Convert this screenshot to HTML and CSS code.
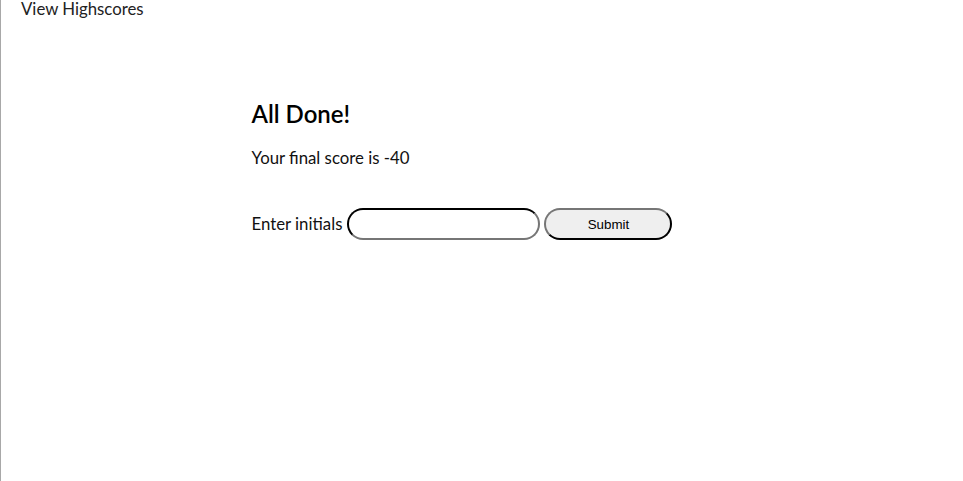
FILE: index.html
```html
<!DOCTYPE html>
<html>
<head>
<meta charset="utf-8">
<link rel="stylesheet" href="styles.css">
</head>
<body>
<div class="page">
  <header class="topbar">
    <a class="highscores">View Highscores</a>
  </header>
  <main class="quiz">
    <h1 class="title">All Done!</h1>
    <p class="score">Your final score is -40</p>
    <form class="entry">
      <label class="label">Enter initials</label>
      <input class="initials" type="text">
      <button class="submit" type="button">Submit</button>
    </form>
  </main>
</div>
</body>
</html>
```
FILE: styles.css
```css
html, body {
  margin: 0;
  padding: 0;
  background: #fff;
}
body {
  font-family: "Lato", "Noto Sans", sans-serif;
  color: #111;
}
.page {
  min-height: 481px;
  box-sizing: border-box;
  border-left: 1px solid #a8a8a8;
}
.topbar {
  padding-left: 20px;
  height: 20px;
  line-height: 18px;
}
.highscores {
  font-size: 16.8px;
  color: #222;
}
.quiz {
  width: 461px;
  margin: 80px auto 0;
}
.title {
  font-size: 24px;
  font-weight: 600;
  margin: 0;
  line-height: 28px;
  color: #000;
}
.score {
  font-size: 16.8px;
  margin: 20px 0 0;
  line-height: 20px;
}
.entry {
  display: flex;
  align-items: center;
  margin-top: 40px;
}
.label {
  font-size: 16.8px;
  margin-right: 5px;
  padding-bottom: 2px;
}
.initials {
  width: 193px;
  height: 32px;
  box-sizing: border-box;
  border: 2px inset #767676;
  border-top-color: #222;
  border-left-color: #222;
  border-radius: 16px;
  margin: 0 4px 0 0;
  padding: 0 10px;
  background: #fff;
}
.submit {
  width: 128px;
  height: 32px;
  box-sizing: border-box;
  border: 2px outset #767676;
  border-right-color: #222;
  border-bottom-color: #222;
  border-radius: 16px;
  background: #efefef;
  font-family: "Liberation Sans", Arial, sans-serif;
  font-size: 13.33px;
  color: #000;
}
```
